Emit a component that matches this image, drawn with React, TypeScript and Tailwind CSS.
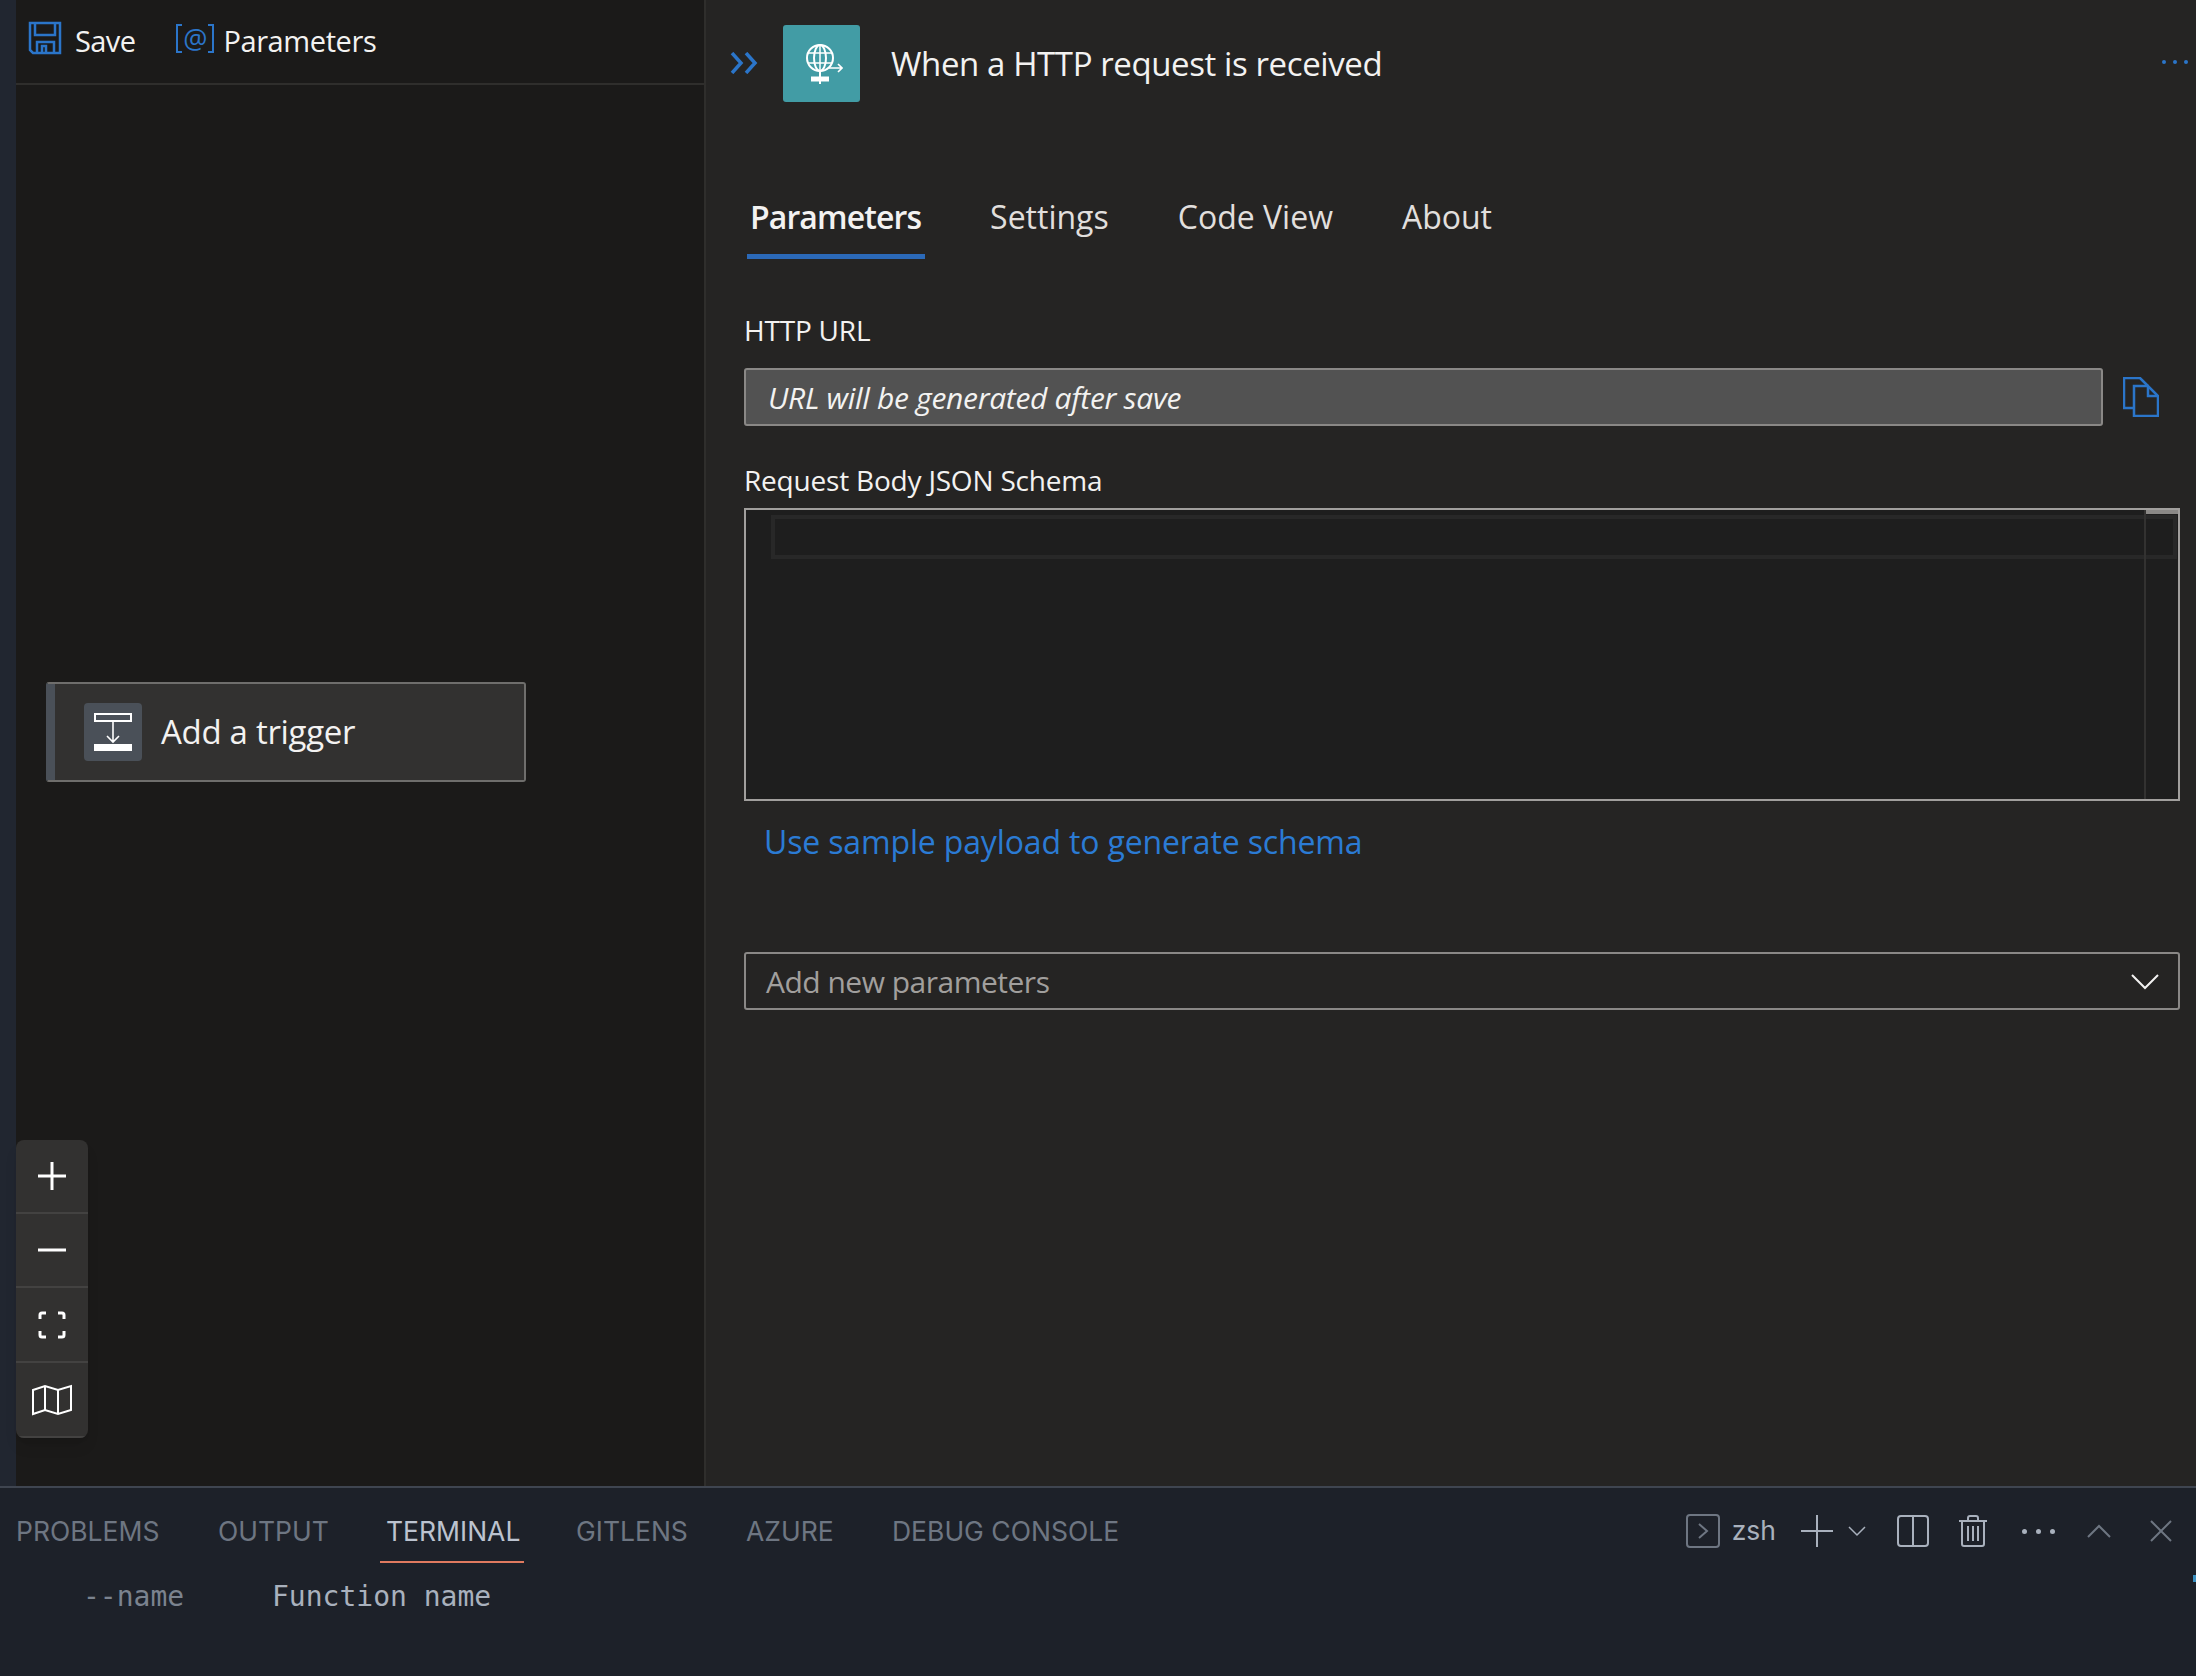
// App.tsx
const UI_FONT = "font-['Open_Sans','Noto_Sans',sans-serif]";

const SaveIcon = () => (
  <svg width="34" height="34" viewBox="0 0 34 34" fill="none" stroke="#2b75c9" strokeWidth="2.5">
    <path d="M2 2h30v30H5l-3-3z" />
    <path d="M7 2v12h20V2" />
    <path d="M9 32V21h17v11" />
    <path d="M14 32v-7h4v7" />
  </svg>
);

const ParamsIcon = () => (
  <div className="ml-[3px] mt-[3px] flex h-[29px] w-[38px] items-center justify-between">
    <span className="h-[29px] w-[6px] border-y-2 border-l-2 border-[#2b75c9]" />
    <span className="font-['Open_Sans',sans-serif] text-[27px] leading-none text-[#2b75c9]">@</span>
    <span className="h-[29px] w-[6px] border-y-2 border-r-2 border-[#2b75c9]" />
  </div>
);

const GlobeIcon = () => (
  <svg className="ml-[6px]" width="37" height="40" viewBox="0 0 37 40" fill="none" stroke="#fff" strokeWidth="2">
    <circle cx="14" cy="14" r="13" />
    <ellipse cx="14" cy="14" rx="6" ry="13" />
    <path d="M2 9h24M2 19h24M14 1v26" strokeWidth="1.5" />
    <path d="M14 27v6" />
    <path d="M23 24h13M32 20l4 4-4 4" strokeWidth="1.6" />
    <path d="M5 35h18" strokeWidth="5" />
    <path d="M14 37v3" />
  </svg>
);

const TriggerIcon = () => (
  <svg width="38" height="38" viewBox="0 0 38 38" fill="none" stroke="#fff">
    <rect x="1" y="1" width="36" height="7" strokeWidth="2" />
    <path d="M19 8v20M13 23l6 6 6-6" strokeWidth="1.6" />
    <rect x="0" y="31" width="38" height="7" fill="#fff" stroke="none" />
  </svg>
);

const MapIcon = () => (
  <svg width="40" height="32" viewBox="0 0 40 32" fill="none" stroke="#fff" strokeWidth="2">
    <path d="M1 6l12-4 13 4 13-4v24l-13 4-13-4-12 4z" />
    <path d="M13 2v24M26 6v24" />
  </svg>
);

const CopyIcon = () => (
  <svg width="36" height="40" viewBox="0 0 36 40" fill="none" stroke="#2b75c9" strokeWidth="2.5">
    <path d="M11 31H1V1h16l8 8" />
    <path d="M11 9h14l10 10v20H11z" fill="#252423" />
    <path d="M25 9v10h10" />
  </svg>
);

const tabs = [
  { label: "PROBLEMS", left: "w-[143px]" },
  { label: "OUTPUT", left: "w-[109px]" },
  { label: "TERMINAL", left: "w-[131px]", active: true },
  { label: "GITLENS", left: "w-[111px]" },
  { label: "AZURE", left: "w-[87px]" },
  { label: "DEBUG CONSOLE", left: "w-[226px]" },
];

const panelTabs = ["Settings", "Code View", "About"];

export default function App() {
  return (
    <div className={`flex h-[1676px] w-[2196px] flex-col overflow-hidden bg-[#252423] ${UI_FONT}`}>
      <div className="flex h-[1486px]">
        <div className="w-4 bg-[#212630]" />

        {/* designer canvas */}
        <div className="flex w-[688px] flex-col bg-[#1b1a19]">
          <div className="flex h-[85px] items-start gap-[13px] border-b-2 border-[#2f2e2c] pl-3 pt-[21px]">
            <SaveIcon />
            <span className="-mt-[1px] mr-[25px] text-[29px] leading-[42px] tracking-[-0.6px] text-[#f3f2f1]">Save</span>
            <ParamsIcon />
            <span className="-ml-[4px] -mt-[1px] text-[29px] leading-[42px] tracking-[-0.4px] text-[#f3f2f1]">Parameters</span>
          </div>

          <div className="relative flex-1">
            <div className="absolute left-[30px] top-[597px] flex h-[100px] w-[480px] items-center rounded-[3px] border-2 border-[#6f6e6c] border-l-[#4a5058] bg-[#323130]">
              <div className="h-full w-[7px] bg-[#4a5058]" />
              <div className="ml-[29px] flex h-[58px] w-[58px] items-center justify-center rounded-[4px] bg-[#4a5058]">
                <TriggerIcon />
              </div>
              <span className="ml-[19px] text-[33px] tracking-[-0.3px] text-[#f3f2f1]">Add a trigger</span>
            </div>

            <div className="absolute left-0 top-[1055px] flex w-[72px] flex-col overflow-hidden rounded-lg bg-[#323130] shadow-lg">
              <div className="flex h-[74px] items-center justify-center border-b-2 border-[#434241]">
                <svg width="28" height="28" viewBox="0 0 28 28" stroke="#fff" strokeWidth="3"><path d="M0 14h28M14 0v28" /></svg>
              </div>
              <div className="flex h-[74px] items-center justify-center border-b-2 border-[#434241]">
                <svg width="28" height="4" viewBox="0 0 28 4" stroke="#fff" strokeWidth="3"><path d="M0 2h28" /></svg>
              </div>
              <div className="flex h-[75px] items-center justify-center border-b-2 border-[#434241]">
                <svg width="28" height="28" viewBox="0 0 28 28" fill="none" stroke="#fff" strokeWidth="3">
                  <path d="M8 2H4Q2 2 2 4v4M20 2h4q2 0 2 2v4M8 26H4q-2 0-2-2v-4M20 26h4q2 0 2-2v-4" />
                </svg>
              </div>
              <div className="flex h-[75px] items-center justify-center border-b-2 border-[#434241]">
                <MapIcon />
              </div>
            </div>
          </div>
        </div>

        {/* details panel */}
        <div className="flex flex-1 flex-col border-l-2 border-[#2f2e2c] pr-4">
          <div className="flex h-[102px] items-end">
            <div className="mb-[28px] ml-[24px] h-[22px] w-[28px]">
              <svg width="28" height="22" viewBox="0 0 28 22" fill="none" stroke="#2b75c9" strokeWidth="3.5">
                <path d="M2 1l9 10-9 10M16 1l9 10-9 10" />
              </svg>
            </div>
            <div className="ml-[25px] flex h-[77px] w-[77px] items-center justify-center rounded-[3px] bg-[#429ca5]">
              <GlobeIcon />
            </div>
            <h1 className="ml-[31px] self-center pt-[26px] text-[33px] font-normal tracking-[-0.4px] text-[#f3f2f1]">
              When a HTTP request is received
            </h1>
            <div className="-mr-[8px] ml-auto flex gap-[7px] self-center pt-[22px]">
              <span className="h-1 w-1 rounded-full bg-[#2b75c9]" />
              <span className="h-1 w-1 rounded-full bg-[#2b75c9]" />
              <span className="h-1 w-1 rounded-full bg-[#2b75c9]" />
            </div>
          </div>

          <div className="mt-[86px] flex h-[71px] items-start pl-[41px]">
            <div className="mr-[65px] flex flex-col">
              <span className="pb-[8px] pl-[3px] pr-[4px] text-[32px] font-semibold leading-[58px] tracking-[-0.9px] text-[#f3f2f1]">Parameters</span>
              <span className="h-[5px] bg-[#2b69b8]" />
            </div>
            {panelTabs.map((t) => (
              <span key={t} className="mr-[69px] text-[32px] leading-[58px] text-[#e1dfdd]">
                {t}
              </span>
            ))}
          </div>

          <div className="flex flex-col pl-[38px]">
            <label className="mt-[51px] text-[28px] leading-[40px] tracking-[-0.2px] text-[#f3f2f1]">HTTP URL</label>
            <div className="mt-[18px] flex items-center">
              <div className="flex h-[58px] w-[1359px] items-center rounded-[3px] border-2 border-[#8a8886] bg-[#525252] pl-[22px] text-[30px] italic tracking-[-0.3px] text-[#f3f2f1]">
                URL will be generated after save
              </div>
              <div className="ml-[20px]">
                <CopyIcon />
              </div>
            </div>

            <label className="mt-[34px] text-[28px] leading-[40px] tracking-[-0.2px] text-[#f3f2f1]">Request Body JSON Schema</label>
            <div className="relative mt-[8px] h-[293px] w-[1436px] border-2 border-[#a19f9d] bg-[#1e1e1e] pl-[25px] pt-[5px]">
              <div className="h-[44px] w-[1406px] border-4 border-[#282828]" />
              <div className="absolute right-0 top-0 h-full w-[34px] border-l-2 border-[#333231]">
                <div className="h-1 bg-[#8a8886]" />
              </div>
            </div>

            <a className="ml-[20px] mt-[19px] text-[32px] leading-[44px] tracking-[-0.15px] text-[#2b7bd4]">
              Use sample payload to generate schema
            </a>

            <div className="mt-[88px] flex h-[58px] w-[1436px] items-center justify-between rounded-[3px] border-2 border-[#8a8886] pl-[20px] pr-[19px]">
              <span className="text-[30px] tracking-[-0.5px] text-[#a19f9d]">Add new parameters</span>
              <svg className="mt-[2px]" width="28" height="16" viewBox="0 0 28 16" fill="none" stroke="#f3f2f1" strokeWidth="2">
                <path d="M1 1l13 13L27 1" />
              </svg>
            </div>
          </div>
        </div>
      </div>

      {/* bottom panel */}
      <div className="relative flex h-[190px] flex-col border-t-2 border-[#3f4550] bg-[#1d2129] font-['Inter',sans-serif]">
        <div className="flex h-[86px] items-center pl-4 pr-[24px]">
          <div className="flex gap-[59px]">
            {tabs.map((t) => (
              <div key={t.label} className={`relative ${t.left}`}>
                <span className={`whitespace-nowrap text-[26.5px] leading-[30px] ${t.active ? "text-[#bcc3cf]" : "text-[#6e7682]"}`}>
                  {t.label}
                </span>
                {t.active && <div className="absolute -left-[6px] -right-[7px] top-[45px] h-[2px] bg-[#e07a5f]" />}
              </div>
            ))}
          </div>

          <div className="ml-auto flex items-center">
            <svg width="34" height="34" viewBox="0 0 34 34" fill="none" stroke="#6e7682" strokeWidth="2">
              <rect x="1" y="1" width="32" height="32" rx="3" />
              <path d="M13 10l8 7-8 7" />
            </svg>
            <span className="ml-[12px] text-[26.5px] text-[#a9b1bd]">zsh</span>
            <svg className="ml-[25px]" width="32" height="32" viewBox="0 0 32 32" stroke="#a9b1bd" strokeWidth="2"><path d="M0 16h32M16 0v32" /></svg>
            <svg className="ml-[14px]" width="20" height="12" viewBox="0 0 20 12" fill="none" stroke="#a9b1bd" strokeWidth="1.5"><path d="M2 2l8 8 8-8" /></svg>
            <svg className="ml-[30px]" width="32" height="32" viewBox="0 0 32 32" fill="none" stroke="#a9b1bd" strokeWidth="2">
              <rect x="1" y="1" width="30" height="30" rx="3" />
              <path d="M16 1v30" />
            </svg>
            <svg className="ml-[30px]" width="28" height="32" viewBox="0 0 28 32" fill="none" stroke="#a9b1bd" strokeWidth="2">
              <path d="M0 6h28M9 6V3q0-2 2-2h6q2 0 2 2v3M3 6v23q0 2 2 2h18q2 0 2-2V6M9 11v15M14 11v15M19 11v15" />
            </svg>
            <div className="ml-[35px] flex gap-[9px]">
              <span className="h-[5px] w-[5px] rounded-full bg-[#a9b1bd]" />
              <span className="h-[5px] w-[5px] rounded-full bg-[#a9b1bd]" />
              <span className="h-[5px] w-[5px] rounded-full bg-[#a9b1bd]" />
            </div>
            <svg className="ml-[32px]" width="24" height="14" viewBox="0 0 24 14" fill="none" stroke="#6e7682" strokeWidth="2"><path d="M1 13L12 2l11 11" /></svg>
            <svg className="ml-[39px]" width="22" height="22" viewBox="0 0 22 22" fill="none" stroke="#6e7682" strokeWidth="2"><path d="M1 1l20 20M21 1L1 21" /></svg>
          </div>
        </div>
        <div className="mt-[6px] flex pl-[83px] font-['DejaVu_Sans_Mono',monospace] text-[28px] leading-[34px]">
          <span className="w-[189px] text-[#7b838f]">--name</span>
          <span className="text-[#a9b1bd]">Function name</span>
        </div>
        <div className="absolute right-0 top-[87px] h-[7px] w-[3px] bg-[#3a8fbf]" />
      </div>
    </div>
  );
}
